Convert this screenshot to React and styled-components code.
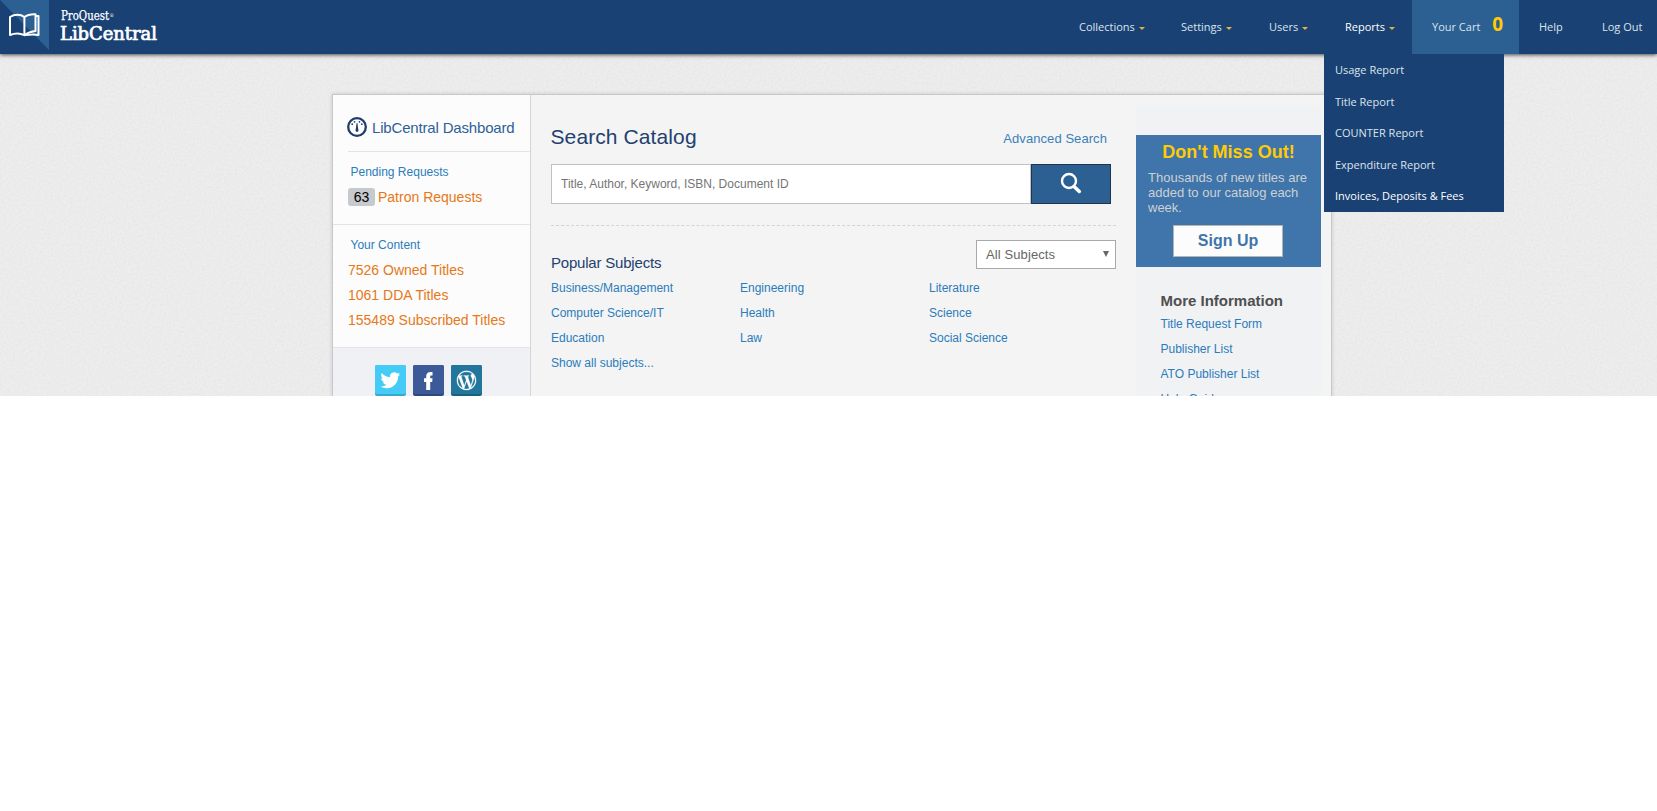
import React from "react";
import styled, { createGlobalStyle, css } from "styled-components";

const Global = createGlobalStyle`
  *{box-sizing:border-box}
  body{margin:0;background:#fff;font-family:"Liberation Sans",Arial,sans-serif}
  a{text-decoration:none;color:inherit}
  h1,h2,h3,p,ul{margin:0;padding:0;font-weight:normal}
  ul{list-style:none}
`;

const Screen = styled.div`
  position:relative;
  height:396px;
  overflow:hidden;
  background:#ededed;
`;
const Grain = styled.svg`
  position:absolute;
  inset:0;
  width:100%;
  height:100%;
`;
const Header = styled.header`
  position:relative;
  z-index:2;
  height:54px;
  display:flex;
  justify-content:space-between;
  background:#1a4173;
  box-shadow:0 1px 4px rgba(0,0,0,.7);
`;
const Brand = styled.a`
  display:flex;
`;
const Wordmark = styled.svg`
  margin-left:8px;
`;
const Nav = styled.nav`
  display:flex;
  font:11px/53px "Open Sans",sans-serif;
  color:#dbe4ed;
`;
const NavItem = styled.div`
  position:relative;
  width:${p => p.$w}px;
  padding-left:${p => p.$pad || 0}px;
  padding-bottom:1px;
  display:flex;
  align-items:center;
  white-space:nowrap;
  ${p => p.$on && css`color:#fff;`}
  ${p => p.$cart && css`background:#2c6093;`}
`;
const Caret = styled.i`
  margin-left:4px;
  margin-top:3px;
  border:3px solid transparent;
  border-top-color:#e0b53c;
  border-bottom:0;
`;
const Count = styled.b`
  margin-left:12px;
  margin-top:-4px;
  font-size:19px;
  color:#ffcb05;
`;
const Menu = styled.ul`
  position:absolute;
  top:54px;
  left:0;
  width:180px;
  height:158px;
  padding-left:11px;
  background:#1a4173;
  color:#dbe4ed;
  line-height:31.5px;
`;
const MenuItem = styled.li`
  ${p => p.$on && css`color:#fff;`}
`;

const Panel = styled.main`
  position:relative;
  margin:40px 0 0 332px;
  width:1000px;
  height:320px;
  display:flex;
  background:#f4f4f4;
  border:1px solid #c6c8cc;
  box-shadow:0 0 4px rgba(0,0,0,.15);
`;
const Side = styled.aside`
  width:198px;
  background:#fcfcfc;
  border-right:1px solid #d4d5d8;
`;
const SideTitle = styled.h2`
  margin-left:15px;
  height:57px;
  padding-top:8px;
  display:flex;
  align-items:center;
  gap:5px;
  font-size:15px;
  letter-spacing:-.17px;
  white-space:nowrap;
  color:#2f5f98;
  border-bottom:1px solid #e3e4e6;
  svg{margin-left:-1px}
`;
const SideBlock = styled.section`
  height:${p => p.$h}px;
  padding:${p => p.$pt}px 0 0 15px;
  border-bottom:1px solid #e1e4e8;
`;
const SideLabel = styled.h3`
  padding-left:2.5px;
  margin-bottom:4px;
  font-size:12px;
  line-height:16px;
  color:#2b7cbb;
`;
const Orange = styled.a`
  display:flex;
  align-items:center;
  height:25px;
  font-size:14px;
  color:#e67817;
`;
const Badge = styled.span`
  width:27px;
  height:18px;
  margin-right:3px;
  border-radius:3px;
  background:#c6c9ce;
  color:#000;
  text-align:center;
  line-height:18px;
`;
const Social = styled.div`
  height:60px;
  padding:17px 0 0 42px;
  display:flex;
  gap:7px;
  background:#f0f1f4;
`;

const Content = styled.section`
  width:605px;
  padding:0 20px;
`;
const TitleRow = styled.div`
  display:flex;
  justify-content:space-between;
  height:69px;
  padding:29px 9px 0 0;
`;
const Title = styled.h1`
  font-size:21px;
  line-height:26px;
  letter-spacing:.1px;
  margin-left:-.5px;
  color:#23406f;
`;
const Advanced = styled.a`
  font-size:13px;
  line-height:29px;
  letter-spacing:.07px;
  color:#3a80ba;
`;
const SearchBar = styled.div`
  display:flex;
  width:560px;
  height:40px;
`;
const SearchInput = styled.input`
  width:480px;
  padding:0 9px;
  border:1px solid #bcc2c8;
  background:#fff;
  font:12px "Liberation Sans",sans-serif;
  &::placeholder{color:#757575;opacity:1}
`;
const SearchButton = styled.button`
  width:80px;
  padding:0;
  border:1px solid #23344c;
  background:#2c6093;
`;
const SubjectHead = styled.div`
  display:flex;
  justify-content:space-between;
  margin-top:21px;
  height:51px;
  padding-top:14px;
  border-top:1px dashed #d4d4d4;
`;
const SubTitle = styled.h2`
  padding-top:14px;
  font-size:15px;
  line-height:18px;
  letter-spacing:-.2px;
  color:#23406f;
`;
const Select = styled.div`
  width:140px;
  height:29px;
  padding:0 6px 1px 9px;
  display:flex;
  align-items:center;
  justify-content:space-between;
  border:1px solid #a9a9a9;
  background:#fff;
  font-size:13px;
  letter-spacing:.1px;
  color:#666;
`;
const Down = styled.i`
  border:3px solid transparent;
  border-top:6px solid #666;
  border-bottom:0;
`;
const Subjects = styled.div`
  display:grid;
  grid-template-columns:189px 189px 187px;
  font-size:12px;
  line-height:25px;
  color:#2b7cbb;
`;

const Right = styled.aside`
  width:185px;
  margin-top:10px;
  padding-top:30px;
  background:#f1f2f4;
`;
const Promo = styled.div`
  height:132px;
  padding:6px 12px 0;
  background:#3f75aa;
`;
const PromoTitle = styled.h2`
  font-size:18px;
  line-height:22px;
  font-weight:bold;
  text-align:center;
  white-space:nowrap;
  color:#ffcb05;
`;
const PromoText = styled.p`
  margin-top:7px;
  font-size:13px;
  line-height:15px;
  white-space:nowrap;
  color:#cdd0d3;
`;
const SignUp = styled.a`
  display:block;
  width:110px;
  height:32px;
  margin:10px 0 0 25px;
  border:1px solid #b5b5b5;
  background:#fcfcfc;
  font-size:16px;
  font-weight:bold;
  line-height:30px;
  text-align:center;
  color:#3f75aa;
`;
const More = styled.div`
  padding:25px 0 0 24.5px;
  font-size:12px;
  line-height:25px;
  color:#2b7cbb;
`;
const MoreTitle = styled.h3`
  font-size:15px;
  line-height:18px;
  height:20px;
  font-weight:bold;
  color:#4f4f4f;
`;
const Line = styled.a`
  display:block;
  white-space:nowrap;
`;

const Book = () => (
  <svg width="52" height="54" viewBox="0 0 52 54">
    <path d="M0 0H49V50Z" fill="#2c6093" />
    <g fill="none" stroke="#fff" strokeWidth="2" strokeLinejoin="round">
      <path d="M24.400 17C20.500 14 14.500 14 10 17V35C15 33 20 33 24.400 35.200C28 32.500 31 31.500 35.500 31V14.200C31 14 27.500 14.500 24.400 17Z" />
      <path d="M24.400 17V35M35.500 16H38.500V35C33 33.800 29 34.500 24.400 35.200" />
    </g>
  </svg>
);
const Gauge = () => (
  <svg width="20" height="20" viewBox="0 0 20 20">
    <circle cx="10" cy="10" r="8.800" fill="#fff" stroke="#1f3c6e" strokeWidth="2.300" />
    <g fill="#1f3c6e">
      <circle cx="5.200" cy="7.200" r=".9" /><circle cx="7.500" cy="4.800" r=".9" /><circle cx="12.500" cy="4.800" r=".9" /><circle cx="14.800" cy="7.200" r=".9" />
      <path d="M9.600 6H10.400L11.400 13.300A1.400 1.600 0 0 1 8.600 13.300Z" />
    </g>
  </svg>
);
const Tile = ({ w, fill, dark, children }) => (
  <svg width={w} height="31" viewBox={`0 0 ${w} 31`}>
    <rect width={w} height="31" rx="2" fill={dark} />
    <rect width={w} height="29" rx="2" fill={fill} />
    {children}
  </svg>
);

export default function App() {
  return (
    <>
      <Global />
      <Screen>
        <Grain>
          <filter id="grain">
            <feTurbulence type="fractalNoise" baseFrequency=".45" numOctaves="2" />
            <feColorMatrix values="0 0 0 0 .4  0 0 0 0 .4  0 0 0 0 .4  .2 0 0 0 -.075" />
          </filter>
          <rect width="100%" height="100%" filter="url(#grain)" />
        </Grain>
        <Header>
          <Brand href="#">
            <Book />
            <Wordmark width="110" height="54" fill="#fff" stroke="#fff" fontFamily="DejaVu Serif Condensed, DejaVu Serif, serif">
              <text x="1" y="20" fontSize="12" strokeWidth=".25" textLength="48" lengthAdjust="spacingAndGlyphs">ProQuest</text>
              <text x="49.500" y="17" fontSize="5" strokeWidth="0">®</text>
              <text x="0" y="40" fontSize="18" strokeWidth=".7" textLength="97" lengthAdjust="spacingAndGlyphs">LibCentral</text>
            </Wordmark>
          </Brand>
          <Nav>
            <NavItem $w={102}>Collections<Caret /></NavItem>
            <NavItem $w={88}>Settings<Caret /></NavItem>
            <NavItem $w={55}>Users<Caret /></NavItem>
            <NavItem $w={88} $pad={21} $on>
              Reports<Caret />
              <Menu>
                <MenuItem>Usage Report</MenuItem>
                <MenuItem>Title Report</MenuItem>
                <MenuItem>COUNTER Report</MenuItem>
                <MenuItem>Expenditure Report</MenuItem>
                <MenuItem $on>Invoices, Deposits &amp; Fees</MenuItem>
              </Menu>
            </NavItem>
            <NavItem $w={107} $pad={20} $cart>Your Cart<Count>0</Count></NavItem>
            <NavItem $w={83} $pad={20}>Help</NavItem>
            <NavItem $w={55}>Log Out</NavItem>
          </Nav>
        </Header>
        <Panel>
          <Side>
            <SideTitle><Gauge />LibCentral Dashboard</SideTitle>
            <SideBlock $h={73} $pt={12}>
              <SideLabel>Pending Requests</SideLabel>
              <Orange href="#"><Badge>63</Badge>Patron Requests</Orange>
            </SideBlock>
            <SideBlock $h={123} $pt={12}>
              <SideLabel>Your Content</SideLabel>
              <Orange href="#">7526 Owned Titles</Orange>
              <Orange href="#">1061 DDA Titles</Orange>
              <Orange href="#">155489 Subscribed Titles</Orange>
            </SideBlock>
            <Social>
              <Tile w="31" fill="#44ccf6" dark="#37a9cf">
                <path transform="translate(5.500 5.500) scale(.82)" fill="#fff" d="M23.950 4.570a10 10 0 0 1-2.820.770 4.960 4.960 0 0 0 2.160-2.720c-.950.560-2 .960-3.130 1.190a4.920 4.920 0 0 0-8.380 4.480C7.690 8.090 4.070 6.130 1.640 3.160a4.920 4.920 0 0 0 1.520 6.570 4.900 4.900 0 0 1-2.230-.610v.060a4.920 4.920 0 0 0 3.950 4.830 5 5 0 0 1-2.210.080 4.940 4.940 0 0 0 4.600 3.420A9.870 9.870 0 0 1 0 19.540a14 14 0 0 0 7.550 2.210c9.050 0 14-7.500 14-13.980 0-.210 0-.420-.020-.630a9.940 9.940 0 0 0 2.460-2.550z" />
              </Tile>
              <Tile w="31" fill="#3c5a98" dark="#2f4880">
                <path fill="#fff" d="M13.200 25V17H11V13.200H13.200V11.500C13.200 8.500 14.700 7 17.500 7H19.500V10.500H18.200C17.400 10.500 17.200 11 17.200 11.700V13.200H19.500L19.200 17H17.200V25Z" />
              </Tile>
              <Tile w="31" fill="#22759b" dark="#1b6080">
                <path transform="translate(5.900 5.800) scale(.8)" fill="#fff" stroke="#fff" strokeWidth=".35" d="M21.469 6.825c.840 1.537 1.318 3.300 1.318 5.175 0 3.979-2.156 7.456-5.363 9.325l3.295-9.527c.615-1.540.820-2.771.820-3.864 0-.405-.026-.780-.070-1.110m-7.981.105c.647-.030 1.232-.105 1.232-.105.582-.075.514-.930-.067-.899 0 0-1.755.135-2.880.135-1.064 0-2.850-.150-2.850-.150-.585-.030-.661.855-.075.885 0 0 .540.061 1.125.090l1.680 4.605-2.370 7.080L5.354 6.900c.649-.030 1.234-.100 1.234-.100.585-.075.516-.930-.065-.896 0 0-1.746.138-2.874.138-.200 0-.438-.008-.690-.015C4.911 3.150 8.235 1.215 12 1.215c2.809 0 5.365 1.072 7.286 2.833-.046-.003-.091-.009-.141-.009-1.060 0-1.812.923-1.812 1.914 0 .890.513 1.643 1.060 2.531.411.720.890 1.643.890 2.977 0 .915-.354 1.994-.821 3.479l-1.075 3.585-3.900-11.610zM12 22.784c-1.059 0-2.081-.153-3.048-.437l3.237-9.406 3.315 9.087c.024.053.050.101.078.149-1.120.393-2.325.607-3.582.607M1.211 12c0-1.564.336-3.050.935-4.390L7.290 21.709C3.694 19.960 1.212 16.271 1.211 12M12 0C5.385 0 0 5.385 0 12s5.385 12 12 12 12-5.385 12-12S18.615 0 12 0" />
              </Tile>
            </Social>
          </Side>
          <Content>
            <TitleRow>
              <Title>Search Catalog</Title>
              <Advanced href="#">Advanced Search</Advanced>
            </TitleRow>
            <SearchBar>
              <SearchInput placeholder="Title, Author, Keyword, ISBN, Document ID" />
              <SearchButton aria-label="Search">
                <svg width="22" height="22" viewBox="0 0 22 22" fill="none" stroke="#fff">
                  <circle cx="9" cy="9" r="7" strokeWidth="2.400" />
                  <path d="M14 14.500L19.300 19.500" strokeWidth="3.500" strokeLinecap="round" />
                </svg>
              </SearchButton>
            </SearchBar>
            <SubjectHead>
              <SubTitle>Popular Subjects</SubTitle>
              <Select>All Subjects<Down /></Select>
            </SubjectHead>
            <Subjects>
              <Line>Business/Management</Line><Line>Engineering</Line><Line>Literature</Line>
              <Line>Computer Science/IT</Line><Line>Health</Line><Line>Science</Line>
              <Line>Education</Line><Line>Law</Line><Line>Social Science</Line>
              <Line>Show all subjects...</Line>
            </Subjects>
          </Content>
          <Right>
            <Promo>
              <PromoTitle>Don't Miss Out!</PromoTitle>
              <PromoText>Thousands of new titles are<br />added to our catalog each<br />week.</PromoText>
              <SignUp href="#">Sign Up</SignUp>
            </Promo>
            <More>
              <MoreTitle>More Information</MoreTitle>
              <Line>Title Request Form</Line>
              <Line>Publisher List</Line>
              <Line>ATO Publisher List</Line>
              <Line>Help Guides</Line>
            </More>
          </Right>
        </Panel>
      </Screen>
    </>
  );
}
